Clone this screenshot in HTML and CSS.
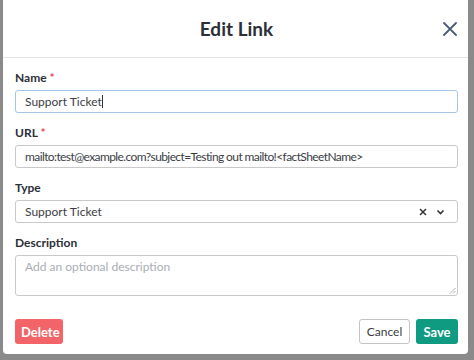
FILE: index.html
```html
<!DOCTYPE html>
<html lang="en">

<head>
    <meta charset="UTF-8">
    <meta name="viewport" content="width=device-width, initial-scale=1.0">
    <title>Edit Link</title>
    <link rel="stylesheet" href="styles.css">
</head>

<body>
    <div class="modal">
        <div class="modal-header">
            <h2>Edit Link</h2>
            <button class="close-btn" aria-label="Close">
                <svg width="14" height="14" viewBox="0 0 14 14">
                    <path d="M1 1 L13 13 M13 1 L1 13" stroke="#4b5b78" stroke-width="1.8" stroke-linecap="round" fill="none"/>
                </svg>
            </button>
        </div>

        <form class="modal-body">
            <div class="form-group">
                <label>Name <span class="req">*</span></label>
                <div class="input focused">Support Ticket<span class="caret"></span></div>
            </div>
            <div class="form-group">
                <label>URL <span class="req">*</span></label>
                <div class="input url">mailto:test@example.com?subject=Testing out mailto!&lt;factSheetName&gt;</div>
            </div>
            <div class="form-group">
                <label>Type</label>
                <div class="input select">
                    <span class="select-value">Support Ticket</span>
                    <span class="select-icons">
                        <svg width="8" height="8" viewBox="0 0 8 8">
                            <path d="M1 1 L7 7 M7 1 L1 7" stroke="#333" stroke-width="1.5" fill="none"/>
                        </svg>
                        <svg width="9" height="6" viewBox="0 0 9 6">
                            <path d="M1.5 1.5 L4.5 4.5 L7.5 1.5" stroke="#333" stroke-width="1.6" fill="none"/>
                        </svg>
                    </span>
                </div>
            </div>
            <div class="form-group">
                <label>Description</label>
                <div class="input textarea">
                    <span class="placeholder">Add an optional description</span>
                    <svg class="grip" width="7" height="7" viewBox="0 0 7 7">
                        <path d="M6.5 1 L1 6.5 M6.5 4 L4 6.5" stroke="#999" stroke-width="0.8" fill="none"/>
                    </svg>
                </div>
            </div>

            <div class="modal-footer">
                <button type="button" class="btn btn-delete">Delete</button>
                <div class="footer-right">
                    <button type="button" class="btn btn-cancel">Cancel</button>
                    <button type="button" class="btn btn-save">Save</button>
                </div>
            </div>
        </form>
    </div>
</body>
</html>
```

FILE: styles.css
```css
body {
    font-family: Lato, "Noto Sans", Arial, sans-serif;
    background-color: #8a8a8a;
    margin: 0;
    padding: 0 6px 6px 3px;
}

.modal {
    background-color: #fff;
    height: 354px;
    border-radius: 0 0 4px 4px;
    display: flex;
    flex-direction: column;
}

.modal-header {
    height: 57px;
    border-bottom: 1px solid #e4e4e4;
    display: flex;
    align-items: center;
    justify-content: center;
    position: relative;
}

.modal-header h2 {
    margin: 0;
    font-size: 19px;
    font-weight: 700;
    color: #2b2f38;
    padding-left: 2px;
}

.close-btn {
    position: absolute;
    right: 11px;
    top: 22px;
    background: none;
    border: none;
    padding: 0;
    width: 14px;
    height: 14px;
    display: flex;
}

.modal-body {
    flex: 1;
    display: flex;
    flex-direction: column;
    padding: 12px 10px 10px 12px;
}

.form-group {
    margin-bottom: 12px;
}

label {
    display: block;
    font-size: 12px;
    font-weight: 700;
    line-height: 16px;
    color: #2b2f38;
    margin-bottom: 4px;
}

.req {
    color: #e34850;
}

.input {
    box-sizing: border-box;
    height: 23px;
    border: 1px solid #c9c9c9;
    border-radius: 3px;
    padding: 0 9px;
    font-size: 12px;
    line-height: 21px;
    color: #3a3d44;
    white-space: nowrap;
    overflow: hidden;
}

.input.focused {
    border-color: #a5c6e6;
}

.input.url {
    letter-spacing: -0.6px;
}

.caret {
    display: inline-block;
    width: 1px;
    height: 13px;
    background-color: #333;
    vertical-align: -2px;
}

.select {
    display: flex;
    align-items: center;
    justify-content: space-between;
}

.select-icons {
    display: flex;
    align-items: center;
    gap: 9px;
    padding-right: 3px;
}

.textarea {
    height: 41px;
    position: relative;
}

.placeholder {
    color: #a9adb3;
}

.grip {
    position: absolute;
    right: 1px;
    bottom: 1px;
}

.modal-footer {
    margin-top: auto;
    display: flex;
    justify-content: space-between;
    align-items: center;
}

.footer-right {
    display: flex;
    gap: 6px;
}

.btn {
    height: 25px;
    border-radius: 3px;
    font-family: inherit;
    font-size: 12px;
    padding: 0 6px;
    cursor: pointer;
}

.btn-delete {
    background-color: #f26468;
    color: #fff;
    border: none;
    font-weight: 700;
    font-size: 13px;
    width: 48px;
}

.btn-cancel {
    background-color: #fff;
    color: #3a3d44;
    border: 1px solid #c4c4c4;
    width: 51px;
}

.btn-save {
    background-color: #0f9a82;
    color: #fff;
    border: none;
    font-weight: 700;
    font-size: 13px;
    width: 42px;
}
```
